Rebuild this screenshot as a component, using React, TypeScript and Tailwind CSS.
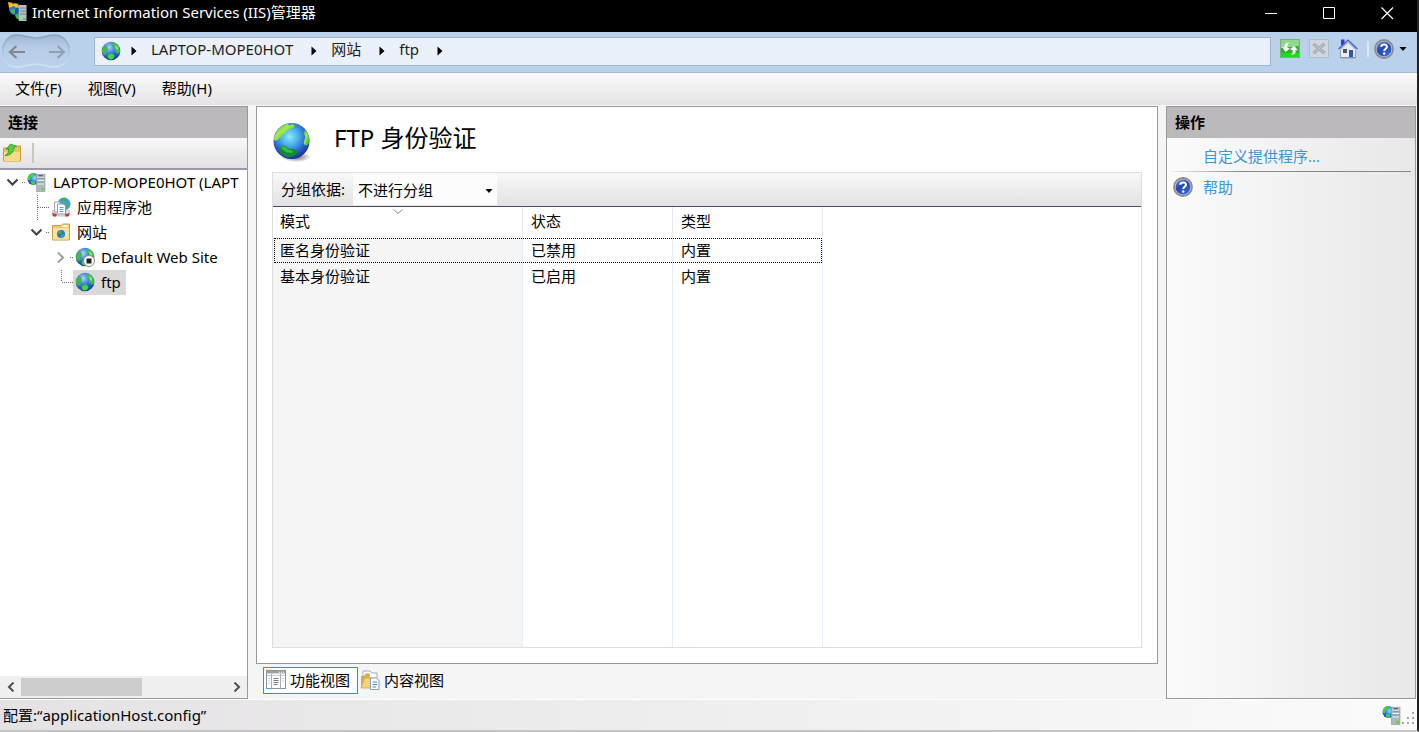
import { useId, useState } from "react";
import type { ReactNode } from "react";

function Globe({ className = "size-10" }: { className?: string }) {
  const id = useId();
  return (
    <svg viewBox="0 0 40 40" className={"shrink-0 " + className} aria-hidden="true">
      <defs>
        <radialGradient id={id + "sea"} cx="0.45" cy="0.38" r="0.62">
          <stop offset="0" stopColor="#8feafb" />
          <stop offset="0.4" stopColor="#46aeea" />
          <stop offset="0.75" stopColor="#2a5fcb" />
          <stop offset="1" stopColor="#1d2f8c" />
        </radialGradient>
        <linearGradient id={id + "land"} x1="0" y1="0" x2="1" y2="1">
          <stop offset="0" stopColor="#2f9e3a" />
          <stop offset="0.4" stopColor="#a6ee4c" />
          <stop offset="1" stopColor="#2a9e3a" />
        </linearGradient>
        <radialGradient id={id + "shade"}>
          <stop offset="0" stopColor="#000" stopOpacity="0.6" />
          <stop offset="1" stopColor="#000" stopOpacity="0" />
        </radialGradient>
      </defs>
      <ellipse cx="24" cy="35" rx="15" ry="5" fill={`url(#${id}shade)`} />
      <circle cx="19.5" cy="19" r="18" fill={`url(#${id}sea)`} />
      <path d="M2 17C3 9 9 3 16 1.500L17 4L20 2L23 4L21 6C17 6 17 9 14 9C13 13 10 12 9 15C7 16 6 19 3 19Z" fill={`url(#${id}land)`} />
      <path d="M33 8C36 11 37 14 37.500 18C37 23 34 25 32 22C31 19 34 17 33 14C31 12 31 10 33 8Z" fill={`url(#${id}land)`} />
      <path d="M8 25C11 22 14 24 17 27C21 26 26 28 25 31C22 36 14 36 11 33C8 31 6 28 8 25Z" fill="#118c36" />
      <path d="M9 25C12 23 14 25 17 28C20 28 22 29 20 31C15 31 10 28 9 25Z" fill="#3ebb45" />
    </svg>
  );
}

function SmallGlobe({ children }: { children?: ReactNode }) {
  const id = useId();
  return (
    <svg viewBox="0 0 20 20" className="size-5 shrink-0" aria-hidden="true">
      <defs>
        <radialGradient id={id} cx="0.4" cy="0.3" r="0.68">
          <stop offset="0" stopColor="#a9d8f8" />
          <stop offset="0.45" stopColor="#3f82de" />
          <stop offset="1" stopColor="#22429f" />
        </radialGradient>
      </defs>
      <circle cx="10" cy="10" r="9.300" fill={`url(#${id})`} />
      <path d="M11 2C14 1 17 4 18.500 7L19 11L17 13L15 11L13.500 10L14 7L11 6L12 4Z" fill="#3fc04a" />
      <path d="M14 4L17 6L17 9L15 8Z" fill="#8be678" />
      <path d="M1 8L3 5L6 5L7 8L5 11L6 13L3 14L1 11Z" fill="#43b552" />
      <path d="M7 14L11 12.500L13.500 15L12 18L9 18.500L7 17Z" fill="#35dd3c" />
      {children}
    </svg>
  );
}

function ServerIcon({ className = "size-5" }: { className?: string }) {
  const id = useId();
  return (
    <svg viewBox="0 0 20 20" className={"shrink-0 " + className} aria-hidden="true">
      <defs>
        <radialGradient id={id} cx="0.6" cy="0.4" r="0.7">
          <stop offset="0" stopColor="#8fe2fc" />
          <stop offset="0.5" stopColor="#2f80dc" />
          <stop offset="1" stopColor="#1b3793" />
        </radialGradient>
      </defs>
      <circle cx="6.500" cy="7" r="6" fill={`url(#${id})`} />
      <path d="M1 5C2 2 5 1 7 1L6 4L4 5L3 8L1 8ZM4 9L8 10L8 12L6 13L4 11Z" fill="#42d638" />
      <path d="M8.500 2.500L10 1.500H18L17 2.500Z" fill="#d9dee2" />
      <rect x="9.500" y="2.500" width="8.500" height="17" fill="#adb8bf" stroke="#8b979f" strokeWidth="0.6" />
      <path d="M10.500 5H17M10.500 8.500H17M10.500 12H17" stroke="#eef2f4" strokeWidth="1" />
      <path d="M11.500 3.800H16" stroke="#333" strokeWidth="0.9" />
      <path d="M10.500 6.500H17M10.500 10H17" stroke="#7e8a93" strokeWidth="0.7" />
      <rect x="14.500" y="16" width="2.500" height="2.500" fill="#62d614" />
    </svg>
  );
}

function TitleIcon() {
  return (
    <svg viewBox="0 0 20 20" className="size-5 shrink-0" aria-hidden="true">
      <circle cx="7" cy="7" r="6" fill="#2a78d6" />
      <path d="M1 6L0 0L5 1L4 2.500C8 0 11 2 11 6L8 6C7 4 5 4 3.500 5Z" fill="#ffb91c" />
      <path d="M2 8L7 7L9 10L5 12Z" fill="#45b84a" />
      <path d="M7 7L10 5L10 14L7 12Z" fill="#2151ad" />
      <rect x="11" y="3" width="7.500" height="16" fill="#b6c0c6" />
      <path d="M12 6H18M12 9H18M12 12H18" stroke="#76828a" />
      <rect x="15" y="16" width="3" height="2" fill="#5fd714" />
      <path d="M7 13L11 11V18L8 16Z" fill="#4caf50" />
    </svg>
  );
}

function FolderUpIcon() {
  return (
    <svg viewBox="0 0 20 20" className="size-5 shrink-0" aria-hidden="true">
      <path d="M1.500 5H11L12.500 3H18.500V18H1.500Z" fill="#e9c467" stroke="#c79c3e" />
      <path d="M2 9H18V18H2Z" fill="#f7da8a" />
      <path d="M3 12.500C6 11 7 9 6.500 5.500L4 6.500L8.500 1L14.500 3.500L12 4.500C12 9 8 13 3 12.500Z" fill="#55cf35" stroke="#249622" strokeWidth="0.8" />
    </svg>
  );
}

function PoolIcon() {
  return (
    <svg viewBox="0 0 20 20" className="size-5 shrink-0" aria-hidden="true">
      <circle cx="13" cy="7" r="6.500" fill="#4a9be0" />
      <path d="M9 2L14 0.500L16 3L13 5L10 4ZM16 5L19 7L18 11L15 8Z" fill="#41b645" />
      <path d="M1 14L4 13H16L19 14L17 19H3Z" fill="#dde3e5" stroke="#aab2b6" strokeWidth="0.6" />
      <path d="M3.500 5H9V15H3.500Z" fill="#f5f8fa" stroke="#9aa4aa" strokeWidth="0.9" />
      <path d="M6.500 7H12.500L14.500 9V17H6.500Z" fill="#fff" stroke="#8c99a1" strokeWidth="0.9" />
      <path d="M8.500 10.500H12.500M8.500 12.500H12.500M8.500 14.500H12.500" stroke="#4d93ca" strokeWidth="0.9" />
      <path d="M1 16L6 17L5 19.500H2ZM19 16L14 17L14.500 19.500H17.500Z" fill="#c8382c" />
    </svg>
  );
}

function SitesIcon() {
  return (
    <svg viewBox="0 0 20 20" className="size-5 shrink-0" aria-hidden="true">
      <path d="M1.500 3.500H10L11.500 2H18.500V18H1.500Z" fill="#edc872" stroke="#c59d48" />
      <path d="M11 4H17" stroke="#fff" strokeWidth="1.500" />
      <path d="M2 6H18V17.500H2Z" fill="#fbe19a" />
      <circle cx="10" cy="12" r="4" fill="#2878d3" />
      <path d="M7 10L10 8.500L11 11L8 12ZM10 13L13 12L12 15L10 15.500Z" fill="#45b83e" />
    </svg>
  );
}

function HelpIcon() {
  const id = useId();
  return (
    <svg viewBox="0 0 20 20" className="size-5 shrink-0" aria-hidden="true">
      <defs>
        <linearGradient id={id} x1="0" y1="0" x2="0.6" y2="1">
          <stop offset="0" stopColor="#6f8fe4" />
          <stop offset="0.5" stopColor="#2846b0" />
          <stop offset="1" stopColor="#3567d8" />
        </linearGradient>
      </defs>
      <circle cx="10" cy="10" r="9" fill="#d3d6dc" stroke="#8b8b8f" strokeWidth="1.800" />
      <circle cx="10" cy="10" r="7.500" fill={`url(#${id})`} />
      <path d="M7.300 7.800C7.300 4.600 13 4.600 13 7.800C13 9.800 10.200 9.800 10.200 12" fill="none" stroke="#fff" strokeWidth="2" />
      <circle cx="10.200" cy="14.500" r="1.200" fill="#fff" />
    </svg>
  );
}

function RefreshIcon() {
  return (
    <svg viewBox="0 0 20 20" className="size-5" aria-hidden="true">
      <rect x="0.500" y="0.500" width="19" height="18" fill="#2fae30" stroke="#7fae86" />
      <path d="M1 1H19V7C13 7 8 9 1 9Z" fill="#8ed98b" />
      <path d="M1 14H19V18H1Z" fill="#14e414" />
      <path d="M9 3.500C5 4 4 6 4.500 8.500L2 8L5.500 13L10 9.500L7.500 9C7 7 7.500 5.500 9 3.500Z" fill="#fff" />
      <path d="M11.500 16C15.500 15.500 16 13 15.500 11L18 11.500L14 6.500L10 10.500L12.500 11C13 13 12.500 14.500 11.500 16Z" fill="#fff" />
    </svg>
  );
}

function StopIcon() {
  return (
    <svg viewBox="0 0 20 20" className="size-5" aria-hidden="true">
      <rect x="0.500" y="0.500" width="19" height="18" fill="#d0d7de" stroke="#b3bdc8" />
      <path d="M4.500 5L15.500 14M15.500 5L4.500 14" stroke="#9aa3ac" strokeWidth="3" />
      <path d="M5 5.500L15 13.500M15 5.500L5 13.500" stroke="#bcc4cb" strokeWidth="1.500" />
    </svg>
  );
}

function HomeIcon() {
  return (
    <svg viewBox="0 0 20 20" className="size-5" aria-hidden="true">
      <path d="M3 0.500H6.500V6H3Z" fill="#2d3fd0" />
      <path d="M2.500 9.500L10 2.500L17.500 9.500V19H2.500Z" fill="#e8ecf1" stroke="#8792a5" strokeWidth="0.8" />
      <path d="M0.500 10L10 1L19.500 10" fill="none" stroke="#4e5fc9" strokeWidth="1.200" />
      <path d="M2 11L10 3.500L18 11" fill="none" stroke="#a7b1c9" />
      <rect x="5" y="10" width="4" height="4" fill="#4d5560" />
      <rect x="11" y="11" width="4" height="8" fill="#2358b5" />
      <path d="M2.500 18.500H17.500" stroke="#8a92a0" />
    </svg>
  );
}

function FeaturesIcon() {
  return (
    <svg viewBox="0 0 20 20" className="size-5 shrink-0" aria-hidden="true">
      <rect x="0.500" y="0.500" width="19" height="18" fill="#fff" stroke="#8e9498" />
      <path d="M1 1H19V3.500H1Z" fill="#9ba2a7" />
      <path d="M13 2.200H14M15 2.200H16M17 2.200H18" stroke="#fff" />
      <path d="M1 5.500H19" stroke="#c5cbd0" />
      <path d="M5.500 4V18M14.500 4V18" stroke="#a9afb3" />
      <path d="M2 8.500H4M2 11H4M2 13.500H4M16 8.500H18M16 11H18" stroke="#b5cee3" />
      <path d="M7.500 8.500H12.500M7.500 10.500H12.500M7.500 12.500H12.500M7.500 14.500H11.500" stroke="#777" />
    </svg>
  );
}

function ContentIcon() {
  return (
    <svg viewBox="0 0 20 20" className="size-5 shrink-0" aria-hidden="true">
      <path d="M3 1H10L12 3H17V11H3Z" fill="#fff" stroke="#a9abad" />
      <path d="M1 6H4L5.500 3.500H10L9 15L1 18Z" fill="#d9ac4e" />
      <path d="M1 18L4.500 8H15L13 18Z" fill="#f3d283" stroke="#cda356" strokeWidth="0.8" />
      <path d="M10.500 8H16.500L19 10.500V19.500H10.500Z" fill="#fff" stroke="#7d95a8" strokeWidth="0.9" />
      <path d="M12.500 12H17M12.500 14.500H17M12.500 17H16" stroke="#3f8ac6" />
    </svg>
  );
}

function NavShape() {
  return (
    <svg viewBox="0 0 72 40" className="pointer-events-none absolute inset-0 h-10 w-[72px]" aria-hidden="true">
      <defs>
        <linearGradient id="navFill" x1="0" y1="0" x2="0" y2="1">
          <stop offset="0" stopColor="#9db4d0" />
          <stop offset="0.35" stopColor="#b6cce6" />
          <stop offset="1" stopColor="#bcd2ec" />
        </linearGradient>
        <linearGradient id="navEdge" x1="0" y1="0" x2="0" y2="1">
          <stop offset="0" stopColor="#8ba0bd" />
          <stop offset="0.5" stopColor="#a9bfda" />
          <stop offset="1" stopColor="#d5e3f4" />
        </linearGradient>
      </defs>
      <path
        d="M17 3C25 3 29 6 36 6C43 6 47 3 54 3C64 3 69 11 69 19C69 28 64 35 54 35C47 35 43 32 36 32C29 32 25 35 17 35C8 35 3 28 3 19C3 11 8 3 17 3Z"
        fill="url(#navFill)"
        stroke="url(#navEdge)"
        strokeWidth="1.500"
      />
    </svg>
  );
}

function RightTriangle() {
  return (
    <svg viewBox="0 0 6 10" className="h-2.5 w-1.5 shrink-0" aria-hidden="true">
      <path d="M0.500 0.500L5.500 5L0.500 9.500Z" fill="#000" />
    </svg>
  );
}

function DownTriangle({ className = "" }: { className?: string }) {
  return (
    <svg viewBox="0 0 8 4" className={"h-1 w-2 shrink-0 " + className} aria-hidden="true">
      <path d="M0.500 0H7.500L4 4Z" fill="#000" />
    </svg>
  );
}

type Gutter = "open" | "closed" | "middle" | "last";

function TreeGutter({ kind }: { kind: Gutter }) {
  const dots = { stroke: "#707070", strokeDasharray: "1 1", fill: "none" };
  return (
    <svg viewBox="0 0 25 25" className="size-[25px] shrink-0" aria-hidden="true">
      {kind === "open" && <path d="M7.500 9.500L12.500 14.500L17.500 9.500" fill="none" stroke="#404040" strokeWidth="2" />}
      {kind === "closed" && <path d="M10 7.500L15 12.500L10 17.500" fill="none" stroke="#a0a0a0" strokeWidth="2" />}
      {(kind === "open" || kind === "closed") && <path d="M22 12.500H25" {...dots} />}
      {kind === "middle" && <path d="M13.500 0V25M14 12.500H25" {...dots} />}
      {kind === "last" && <path d="M13.500 0V12M14 12.500H25" {...dots} />}
    </svg>
  );
}

function TreeRow({ gutter, icon, label, selected }: { gutter: Gutter; icon: ReactNode; label: string; selected?: boolean }) {
  return (
    <div className="flex h-[25px] items-center">
      <TreeGutter kind={gutter} />
      <button
        type="button"
        className={
          selected
            ? "flex h-[25px] items-center gap-1.5 whitespace-nowrap bg-[#d9d9d9] pr-[5px] pb-0.5"
            : "flex h-[25px] items-center gap-1.5 whitespace-nowrap pb-0.5"
        }
      >
        <span className="pl-0.5">{icon}</span>
        <span>{label}</span>
      </button>
    </div>
  );
}

const rows = [
  { mode: "匿名身份验证", status: "已禁用", kind: "内置" },
  { mode: "基本身份验证", status: "已启用", kind: "内置" },
];

const crumbs = ["LAPTOP-MOPE0HOT", "网站", "ftp"];

export default function App() {
  const [active, setActive] = useState(0);
  return (
    <div className="flex min-h-screen flex-col border-r-2 border-b-2 border-r-[#222] border-b-[#c4c4c4] bg-[#f5f5f5] font-['Noto_Sans','Noto_Sans_CJK_SC',sans-serif] text-[15px] leading-5 text-black">
      <header className="flex h-8 shrink-0 items-center justify-between bg-black pl-2 text-white">
        <div className="flex items-center gap-1 pb-2">
          <TitleIcon />
          <span>Internet Information Services (IIS)管理器</span>
        </div>
        <div className="flex pr-px">
          <button type="button" aria-label="最小化" className="flex h-8 w-[58px] items-center justify-center pb-1.5">
            <svg viewBox="0 0 13 13" className="size-[13px]"><path d="M0 6.500H12" stroke="#fff" /></svg>
          </button>
          <button type="button" aria-label="最大化" className="flex h-8 w-[58px] items-center justify-center pb-1.5">
            <svg viewBox="0 0 13 13" className="size-[13px]"><path d="M0.500 0.500H11.500V11.500H0.500Z" fill="none" stroke="#fff" /></svg>
          </button>
          <button type="button" aria-label="关闭" className="flex h-8 w-[58px] items-center justify-center pb-1.5">
            <svg viewBox="0 0 13 13" className="size-[13px]"><path d="M0.500 0.500L12 12M12 0.500L0.500 12" stroke="#fff" strokeWidth="1.200" /></svg>
          </button>
        </div>
      </header>

      <div className="flex h-[41px] shrink-0 items-center border-b border-[#a5bbd7] bg-[#b9d1ea]">
        <div className="relative flex h-10 w-[72px] shrink-0 items-center justify-between pr-1.5 pl-2">
          <NavShape />
          <button type="button" aria-label="后退" className="relative">
            <svg viewBox="0 0 18 16" className="h-4 w-[18px]"><path d="M17 8H2M8.500 2L2 8L8.500 14" fill="none" stroke="#84888d" strokeWidth="2.200" /></svg>
          </button>
          <button type="button" aria-label="前进" className="relative">
            <svg viewBox="0 0 18 16" className="h-4 w-[18px]"><path d="M1 8H16M9.500 2L16 8L9.500 14" fill="none" stroke="#929fae" strokeWidth="2" /></svg>
          </button>
        </div>
        <nav className="mb-0.5 ml-[22px] flex h-[29px] flex-1 items-center gap-2.5 border border-[#9fb4ce] bg-[#eaf1fa] pl-1.5">
          <SmallGlobe />
          <RightTriangle />
          <ol className="flex gap-3.5 pl-1">
            {crumbs.map((crumb) => (
              <li key={crumb} className="flex items-center gap-[18px]">
                <a href="#" className="pb-1 text-[#1e1e1e]">{crumb}</a>
                <RightTriangle />
              </li>
            ))}
          </ol>
        </nav>
        <div className="flex items-center gap-[9px] pr-2.5 pb-1.5 pl-[9px]">
          <button type="button" aria-label="刷新"><RefreshIcon /></button>
          <button type="button" aria-label="停止" disabled><StopIcon /></button>
          <button type="button" aria-label="主页"><HomeIcon /></button>
          <button type="button" aria-label="帮助" className="flex items-center gap-[5px]">
            <span className="h-4 w-0.5 bg-[#e2e6ec]" />
            <HelpIcon />
            <DownTriangle />
          </button>
        </div>
      </div>

      <div className="flex h-8 shrink-0 items-center gap-[26px] bg-linear-to-b from-[#fafafa] to-[#e5e3e5] pb-0.5 pl-[15px]">
        <button type="button">文件(F)</button>
        <button type="button">视图(V)</button>
        <button type="button">帮助(H)</button>
      </div>

      <div className="flex flex-1 gap-2 pt-px pr-px">
        <aside className="flex w-[248px] shrink-0 flex-col border-y border-r border-[#999] bg-white">
          <h2 className="flex h-[31px] items-center bg-[#bbb9bb] pb-0.5 pl-2 font-bold">连接</h2>
          <div className="flex h-8 items-center gap-2.5 border-b-2 border-[#9a98ad] bg-linear-to-b from-[#f8f8f8] to-[#e3e1e3] pl-0.5">
            <button type="button" aria-label="向上"><FolderUpIcon /></button>
            <span className="h-5 w-0.5 bg-[#c9c7bb]" />
          </div>
          <ul className="flex-1 overflow-hidden">
            <li>
              <TreeRow gutter="open" icon={<ServerIcon />} label="LAPTOP-MOPE0HOT (LAPT" />
              <ul className="pl-6">
                <li><TreeRow gutter="middle" icon={<PoolIcon />} label="应用程序池" /></li>
                <li>
                  <TreeRow gutter="open" icon={<SitesIcon />} label="网站" />
                  <ul className="pl-6">
                    <li>
                      <TreeRow
                        gutter="closed"
                        label="Default Web Site"
                        icon={
                          <SmallGlobe>
                            <circle cx="14" cy="14" r="5.500" fill="#fff" stroke="#888" />
                            <rect x="11.500" y="11.500" width="5" height="5" fill="#222" />
                          </SmallGlobe>
                        }
                      />
                    </li>
                    <li><TreeRow gutter="last" icon={<SmallGlobe />} label="ftp" selected /></li>
                  </ul>
                </li>
              </ul>
            </li>
          </ul>
          <div className="flex h-[22px] items-center bg-[#f0f0f0]">
            <button type="button" aria-label="向左滚动" className="flex w-[21px] justify-center">
              <svg viewBox="0 0 8 10" className="h-2.5 w-2"><path d="M6.500 0.500L2 5L6.500 9.500" fill="none" stroke="#505050" strokeWidth="2" /></svg>
            </button>
            <div className="flex-1"><div className="h-[18px] w-[121px] bg-[#cdcdcd]" /></div>
            <button type="button" aria-label="向右滚动" className="flex w-[21px] justify-center">
              <svg viewBox="0 0 8 10" className="h-2.5 w-2"><path d="M1.500 0.500L6 5L1.500 9.500" fill="none" stroke="#505050" strokeWidth="2" /></svg>
            </button>
          </div>
        </aside>

        <main className="flex min-w-0 flex-1 flex-col">
          <section className="flex flex-1 flex-col border border-[#999] bg-white p-[15px]">
            <div className="flex h-[50px] items-start gap-[22px]">
              <Globe />
              <h1 className="text-[24px] leading-8">FTP 身份验证</h1>
            </div>
            <div className="flex flex-1 flex-col border border-[#dedede]">
              <div className="flex h-[34px] items-center gap-2 border-b border-[#4d4b6e] bg-linear-to-b from-[#f9f9f9] to-[#e3e1e3] pl-2">
                <label htmlFor="group" className="pb-0.5">分组依据:</label>
                <div className="relative">
                  <select id="group" className="h-[30px] w-36 appearance-none bg-[#fcfcfc] pl-[5px]">
                    <option>不进行分组</option>
                  </select>
                  <DownTriangle className="pointer-events-none absolute top-3.5 right-1" />
                </div>
              </div>
              <div className="grid flex-1">
                <table className="h-full w-full table-fixed border-separate border-spacing-0 text-left">
                  <thead>
                    <tr className="h-[30px]">
                      <th className="relative w-[250px] border-r border-[#e8e8e8] p-0 pb-0.5 pl-[7px] font-normal">
                        模式
                        <svg viewBox="0 0 10 5" className="absolute top-0.5 left-[120px] h-[5px] w-2.5" aria-hidden="true">
                          <path d="M0.500 0.500L5 4.500L9.500 0.500" fill="none" stroke="#8a8a8a" />
                        </svg>
                      </th>
                      <th className="w-[150px] border-r border-[#e8e8e8] p-0 pb-0.5 pl-2 font-normal">状态</th>
                      <th className="w-[150px] border-r border-[#e8e8e8] p-0 pb-0.5 pl-2 font-normal">类型</th>
                      <td />
                    </tr>
                  </thead>
                  <tbody>
                    {rows.map((row, i) => (
                      <tr key={row.mode} className="h-[26px]" onClick={() => setActive(i)}>
                        <td className="border-r border-[#e4eef8] bg-[#f5f5f5] p-0 pl-px">
                          <div className={active === i ? "h-[25px] border-y border-l border-dotted border-black pl-[5px] leading-[23px]" : "h-[25px] pl-1.5 leading-[25px]"}>{row.mode}</div>
                        </td>
                        <td className="border-r border-[#e4eef8] p-0">
                          <div className={active === i ? "h-[25px] border-y border-dotted border-black pl-2 leading-[23px]" : "h-[25px] pl-2 leading-[25px]"}>{row.status}</div>
                        </td>
                        <td className="border-r border-[#e4eef8] p-0">
                          <div className={active === i ? "h-[25px] border-y border-r border-dotted border-black pl-2 leading-[23px]" : "h-[25px] pl-2 leading-[25px]"}>{row.kind}</div>
                        </td>
                        <td />
                      </tr>
                    ))}
                    <tr aria-hidden="true">
                      <td className="border-r border-[#e4eef8] bg-[#f5f5f5]" />
                      <td className="border-r border-[#e4eef8]" />
                      <td className="border-r border-[#e4eef8]" />
                      <td />
                    </tr>
                  </tbody>
                </table>
              </div>
            </div>
          </section>
          <div className="flex h-[35px] shrink-0 items-start gap-px pt-[3px] pl-[7px]">
            <button type="button" className="flex h-[27px] items-center gap-1 border border-[#2f8fdf] bg-white pr-[7px] pb-0.5 pl-0.5">
              <FeaturesIcon />
              功能视图
            </button>
            <button type="button" className="flex h-[27px] items-center gap-1 px-px pb-0.5">
              <ContentIcon />
              内容视图
            </button>
          </div>
        </main>

        <aside className="flex w-[250px] shrink-0 flex-col border border-[#999] bg-linear-to-r from-[#fbfbfb] to-[#e8e8e8]">
          <h2 className="flex h-[31px] items-center bg-[#bbb9bb] pb-0.5 pl-2 font-bold">操作</h2>
          <a href="#" className="mt-2 pl-9 text-[#3a96d6]">自定义提供程序...</a>
          <div className="mx-1 mt-[5px] h-px bg-linear-to-r from-[#eee] via-[#888] via-30% to-[#888]" />
          <a href="#" className="mt-[5px] flex items-center gap-2.5 pl-1.5 text-[#3a96d6]">
            <HelpIcon />
            帮助
          </a>
        </aside>
      </div>

      <footer className="flex h-[31px] shrink-0 items-center justify-between border-t border-white bg-linear-to-r from-[#e4e2e4] to-[#fbfbfb] pr-0.5 pl-[3px]">
        <span>配置:“applicationHost.config”</span>
        <span className="flex items-center">
          <ServerIcon />
          <svg viewBox="0 0 13 13" className="size-[13px] self-end" aria-hidden="true">
            <path d="M10 0H12V2H10ZM5 5H7V7H5ZM10 5H12V7H10ZM0 10H2V12H0ZM5 10H7V12H5ZM10 10H12V12H10Z" fill="#a6a6a6" />
          </svg>
        </span>
      </footer>
    </div>
  );
}
